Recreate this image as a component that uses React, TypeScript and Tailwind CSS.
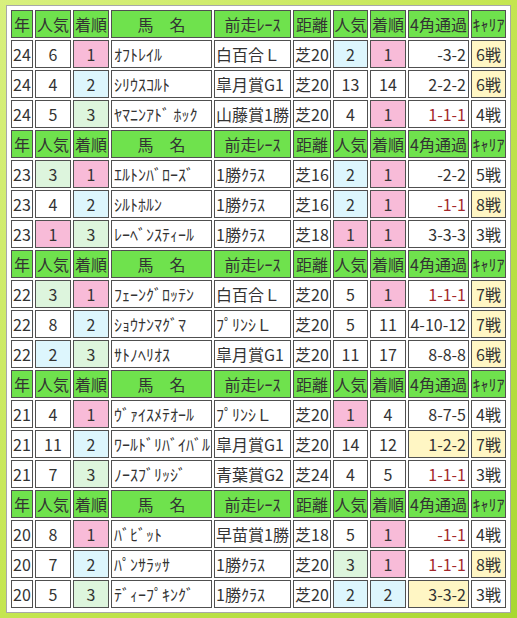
import React from "react";

type C = "p" | "b" | "g" | "y" | "w";
type Row = {
  yr: string;
  ninki: [string, C];
  chaku: [string, C];
  name: string;
  race: string;
  dist: string;
  pn: [string, C];
  pc: [string, C];
  pass: [string, C, boolean];
  career: [string, C];
};

const bgMap: Record<C, string> = {
  p: "bg-[#f8bbd8]",
  b: "bg-[#ddf6fd]",
  g: "bg-[#ddf5dd]",
  y: "bg-[#fff6c4]",
  w: "bg-white",
};

const groups: Row[][] = [
  [
    { yr: "24", ninki: ["6", "w"], chaku: ["1", "p"], name: "ｵﾌﾄﾚｲﾙ", race: "白百合Ｌ", dist: "芝20", pn: ["2", "b"], pc: ["1", "p"], pass: ["-3-2", "w", false], career: ["6戦", "y"] },
    { yr: "24", ninki: ["4", "w"], chaku: ["2", "b"], name: "ｼﾘｳｽｺﾙﾄ", race: "皐月賞G1", dist: "芝20", pn: ["13", "w"], pc: ["14", "w"], pass: ["2-2-2", "w", false], career: ["6戦", "y"] },
    { yr: "24", ninki: ["5", "w"], chaku: ["3", "g"], name: "ﾔﾏﾆﾝｱﾄﾞ ﾎｯｸ", race: "山藤賞1勝", dist: "芝20", pn: ["4", "w"], pc: ["1", "p"], pass: ["1-1-1", "w", true], career: ["4戦", "w"] },
  ],
  [
    { yr: "23", ninki: ["3", "g"], chaku: ["1", "p"], name: "ｴﾙﾄﾝﾊﾞﾛｰｽﾞ", race: "1勝ｸﾗｽ", dist: "芝16", pn: ["2", "b"], pc: ["1", "p"], pass: ["-2-2", "w", false], career: ["5戦", "w"] },
    { yr: "23", ninki: ["4", "w"], chaku: ["2", "b"], name: "ｼﾙﾄﾎﾙﾝ", race: "1勝ｸﾗｽ", dist: "芝16", pn: ["2", "b"], pc: ["1", "p"], pass: ["-1-1", "w", true], career: ["8戦", "y"] },
    { yr: "23", ninki: ["1", "p"], chaku: ["3", "g"], name: "ﾚｰﾍﾞﾝｽﾃｨｰﾙ", race: "1勝ｸﾗｽ", dist: "芝18", pn: ["1", "p"], pc: ["1", "p"], pass: ["3-3-3", "w", false], career: ["3戦", "w"] },
  ],
  [
    { yr: "22", ninki: ["3", "g"], chaku: ["1", "p"], name: "ﾌｪｰﾝｸﾞﾛｯﾃﾝ", race: "白百合Ｌ", dist: "芝20", pn: ["5", "w"], pc: ["1", "p"], pass: ["1-1-1", "w", true], career: ["7戦", "y"] },
    { yr: "22", ninki: ["8", "w"], chaku: ["2", "b"], name: "ｼｮｳﾅﾝﾏｸﾞﾏ", race: "ﾌﾟﾘﾝｼＬ", dist: "芝20", pn: ["5", "w"], pc: ["11", "w"], pass: ["4-10-12", "w", false], career: ["7戦", "y"] },
    { yr: "22", ninki: ["2", "b"], chaku: ["3", "g"], name: "ｻﾄﾉﾍﾘｵｽ", race: "皐月賞G1", dist: "芝20", pn: ["11", "w"], pc: ["17", "w"], pass: ["8-8-8", "w", false], career: ["6戦", "y"] },
  ],
  [
    { yr: "21", ninki: ["4", "w"], chaku: ["1", "p"], name: "ｳﾞｧｲｽﾒﾃｵｰﾙ", race: "ﾌﾟﾘﾝｼＬ", dist: "芝20", pn: ["1", "p"], pc: ["4", "w"], pass: ["8-7-5", "w", false], career: ["4戦", "w"] },
    { yr: "21", ninki: ["11", "w"], chaku: ["2", "b"], name: "ﾜｰﾙﾄﾞﾘﾊﾞｲﾊﾞﾙ", race: "皐月賞G1", dist: "芝20", pn: ["14", "w"], pc: ["12", "w"], pass: ["1-2-2", "y", false], career: ["7戦", "y"] },
    { yr: "21", ninki: ["7", "w"], chaku: ["3", "g"], name: "ﾉｰｽﾌﾞﾘｯｼﾞ", race: "青葉賞G2", dist: "芝24", pn: ["4", "w"], pc: ["5", "w"], pass: ["1-1-1", "w", true], career: ["3戦", "w"] },
  ],
  [
    { yr: "20", ninki: ["8", "w"], chaku: ["1", "p"], name: "ﾊﾞﾋﾞｯﾄ", race: "早苗賞1勝", dist: "芝18", pn: ["5", "w"], pc: ["1", "p"], pass: ["-1-1", "w", true], career: ["4戦", "w"] },
    { yr: "20", ninki: ["7", "w"], chaku: ["2", "b"], name: "ﾊﾟﾝｻﾗｯｻ", race: "1勝ｸﾗｽ", dist: "芝20", pn: ["3", "g"], pc: ["1", "p"], pass: ["1-1-1", "w", true], career: ["8戦", "y"] },
    { yr: "20", ninki: ["5", "w"], chaku: ["3", "g"], name: "ﾃﾞｨｰﾌﾟｷﾝｸﾞ", race: "1勝ｸﾗｽ", dist: "芝20", pn: ["2", "b"], pc: ["2", "b"], pass: ["3-3-2", "y", false], career: ["3戦", "w"] },
  ],
];

const headers = ["年", "人気", "着順", "馬　名", "前走ﾚｰｽ", "距離", "人気", "着順", "4角通過", "ｷｬﾘｱ"];

function Cell({
  children,
  bg,
  align = "center",
  red = false,
}: {
  children: React.ReactNode;
  bg: string;
  align?: "left" | "center" | "right";
  red?: boolean;
}) {
  const a =
    align === "left"
      ? "justify-start pl-[1px]"
      : align === "right"
      ? "justify-end pr-[2px]"
      : "justify-center";
  return (
    <div
      className={`flex items-center overflow-hidden whitespace-nowrap border border-[#505050] leading-none ${bg} ${a} ${
        red ? "text-[#a4282c]" : "text-[#333333]"
      }`}
    >
      {children}
    </div>
  );
}

function HeaderRow() {
  return (
    <>
      {headers.map((h, i) => (
        <Cell key={i} bg="bg-[#6fe24d]">
          {h}
        </Cell>
      ))}
    </>
  );
}

export default function App() {
  return (
    <div className="h-[618px] w-[517px] bg-gradient-to-br from-[#d8f07e] via-[#c4e650] to-[#a8d830] pt-[5px] pl-[6px] pr-[6px] pb-[5px]">
      <div
        className="border border-[#a8a8a8] bg-white p-[4px] text-[16px]"
        style={{ fontFamily: '"Noto Sans CJK JP", "Noto Sans", sans-serif' }}
      >
        <div className="grid grid-cols-[22px_36px_36px_101px_77px_38px_35px_36px_61px_35px] auto-rows-[28px] gap-[2px]">
          {groups.map((g, gi) => (
            <React.Fragment key={gi}>
              <HeaderRow />
              {g.map((r, ri) => (
                <React.Fragment key={ri}>
                  <Cell bg={bgMap.w}>{r.yr}</Cell>
                  <Cell bg={bgMap[r.ninki[1]]}>{r.ninki[0]}</Cell>
                  <Cell bg={bgMap[r.chaku[1]]}>{r.chaku[0]}</Cell>
                  <Cell bg={bgMap.w} align="left">
                    <span className="pl-[1px]">{r.name}</span>
                  </Cell>
                  <Cell bg={bgMap.w} align="left">
                    {r.race}
                  </Cell>
                  <Cell bg={bgMap.w} align="left">
                    {r.dist}
                  </Cell>
                  <Cell bg={bgMap[r.pn[1]]}>{r.pn[0]}</Cell>
                  <Cell bg={bgMap[r.pc[1]]}>{r.pc[0]}</Cell>
                  <Cell bg={bgMap[r.pass[1]]} align="right" red={r.pass[2]}>
                    {r.pass[0]}
                  </Cell>
                  <Cell bg={bgMap[r.career[1]]}>{r.career[0]}</Cell>
                </React.Fragment>
              ))}
            </React.Fragment>
          ))}
        </div>
      </div>
    </div>
  );
}
